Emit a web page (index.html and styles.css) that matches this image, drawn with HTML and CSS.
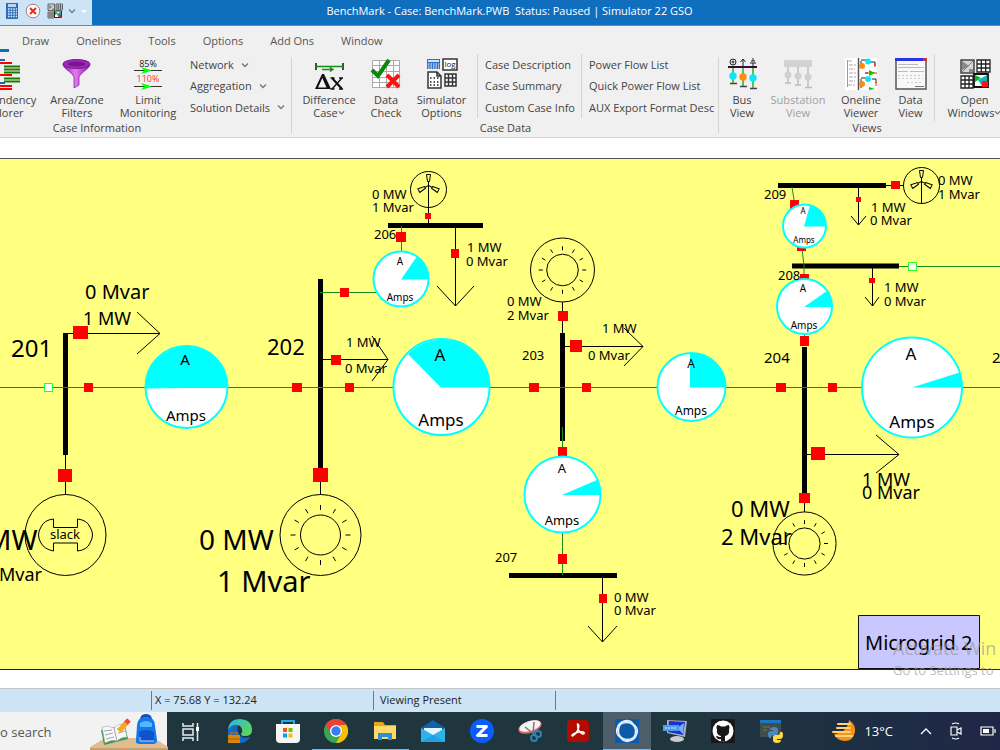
FILE: index.html
```html
<!DOCTYPE html>
<html lang="en">
<head>
<meta charset="utf-8">
<title>BenchMark - Simulator</title>
<link rel="stylesheet" href="styles.css">
</head>
<body>
<header class="titlebar">
  <div class="quick">
    <button class="quick-btn" aria-label="Calculator"><svg width="14" height="16" viewBox="0 0 14 16"><path fill="#2f6db5" d="M1 0h12v16H1z"/><path fill="#b8d8f5" d="M3 1h8v3H3z"/><path stroke="#d7ebfb" stroke-width="1.4" stroke-dasharray="1.6 1" d="M3 6h9M3 8.5h9M3 11h9M3 13.5h9"/></svg></button>
    <button class="quick-btn" aria-label="Abort"><svg width="16" height="16" viewBox="0 0 16 16"><circle cx="8" cy="8" r="6.8" fill="#fff" stroke="#9a7f7f"/><path stroke="#f0281e" stroke-width="2" d="M5 5l6 6M11 5l-6 6"/></svg></button>
    <button class="quick-btn" aria-label="Windows"><svg width="16" height="16" viewBox="0 0 32 32"><use href="#windows"/></svg></button>
    <button class="quick-btn quick-small" aria-label="More"><svg width="8" height="8" viewBox="0 0 8 8"><path class="chev" d="M1 2.5l3 3 3-3"/></svg></button>
    <button class="quick-btn quick-small" aria-label="Customize"><svg width="6" height="8" viewBox="0 0 6 8"><path fill="#fff" d="M0 3h6l-3 3z"/></svg></button>
  </div>
  <h1 class="title">BenchMark - Case: BenchMark.PWB&nbsp; Status: Paused | Simulator 22 GSO</h1>
</header>
<nav class="tabs">
  <button class="tab">Draw</button><button class="tab">Onelines</button><button class="tab">Tools</button><button class="tab">Options</button><button class="tab">Add Ons</button><button class="tab">Window</button>
</nav>
<section class="ribbon">
  <div class="group group-info">
    <div class="tools">
      <button class="tool w-explorer"><svg width="42" height="32" viewBox="0 0 42 32"><path stroke="#1469b8" stroke-width="2" d="M0 2h5M0 25h5"/><path stroke="#f00" stroke-width="2" d="M0 5h12M0 17h12M0 28h12M0 31h12"/><path stroke="#1f7a00" stroke-width="2" d="M4 8.500h16M4 11.500h16M4 14.500h16M4 20.500h16M4 23.500h16"/></svg><span class="flush">ndency<br>lorer</span></button>
      <button class="tool w-area"><svg width="32" height="32" viewBox="0 0 32 32"><defs><linearGradient id="fun"><stop offset="0" stop-color="#8b1fa8"/><stop offset=".45" stop-color="#e27bf0"/><stop offset="1" stop-color="#8a1ba6"/></linearGradient></defs><path fill="url(#fun)" stroke="#7c1694" stroke-width=".7" d="M2 6c0 5 8 7 11 13v11l5-3v-8c3-6 11-8 11-13z"/><ellipse cx="15.500" cy="6" rx="13.500" ry="4.500" fill="#a02abb" stroke="#7c1694"/><ellipse cx="15.500" cy="6" rx="9" ry="2.500" fill="#7a178f"/></svg><span>Area/Zone<br>Filters</span></button>
      <button class="tool w-limit"><svg width="32" height="32" viewBox="0 0 32 32"><text x="16" y="9" text-anchor="middle" font-size="9">85%</text><text x="16" y="24" text-anchor="middle" font-size="9" fill="#f33">110%</text><path stroke="#333" d="M2 12.500h28M2 28.500h28"/><path fill="#0f0" d="M9 9l11 3.500L9 16l3-3.500zM9 25l11 3.500L9 32l3-3.500z"/></svg><span>Limit<br>Monitoring</span></button>
      <div class="list list-plain">
        <button class="item">Network <svg width="8" height="8" viewBox="0 0 8 8"><path class="chev" d="M1 2.500l3 3 3-3"/></svg></button>
        <button class="item">Aggregation <svg width="8" height="8" viewBox="0 0 8 8"><path class="chev" d="M1 2.500l3 3 3-3"/></svg></button>
        <button class="item">Solution Details <svg width="8" height="8" viewBox="0 0 8 8"><path class="chev" d="M1 2.500l3 3 3-3"/></svg></button>
      </div>
    </div>
    <div class="caption">Case Information</div>
  </div>
  <div class="group group-data">
    <div class="tools">
      <button class="tool w-diff"><svg width="32" height="32" viewBox="0 0 32 32"><path stroke="#111" stroke-width="1.500" d="M3 5v7M30 5v7"/><path stroke="#178a17" stroke-width="1.300" fill="none" d="M3 8.500h27M9 11.500h10M17 9.500l3 2-3 2"/><path fill="#111" fill-rule="evenodd" d="M2 31L9 16h2l7 15zM5 29.500h8.500L9.300 20z"/><path stroke="#111" stroke-width="2.200" d="M19 20l10 11"/><path stroke="#111" stroke-width="1.400" d="M29 20L19 31M17.500 20h4M26 20h4M17.500 31h4M26 31h4"/></svg><span>Difference<br>Case<svg width="7" height="8" viewBox="0 0 8 8"><path class="chev" d="M1 2l3 3 3-3"/></svg></span></button>
      <button class="tool w-check"><svg width="32" height="32" viewBox="0 0 32 32"><path fill="#fff" stroke="#aaa" d="M2.500 2.500h27v27h-27zM9.500 2.500v27M16.500 2.500v27M23.500 2.500v27M2.500 7.500h27M2.500 13.500h27M2.500 19.500h27M2.500 24.500h27"/><path stroke="#0a860a" stroke-width="4" fill="none" d="M2 12l6 6L19 2"/><path stroke="#f11" stroke-width="4" d="M17 17l12 12M29 17L17 29"/></svg><span>Data<br>Check</span></button>
      <button class="tool w-sim"><svg width="32" height="32" viewBox="0 0 32 32"><path fill="#2e71c8" d="M1 1h13v10H1z"/><path stroke="#fff" stroke-dasharray="1.500 1" d="M2 6h11M2 8h11M2 10h11"/><path fill="#cfe4ff" d="M2 2h11v2H2z"/><path fill="#fff" stroke="#333" stroke-width="1.500" d="M17 1h14v11H17zM2 14h9l4 4v12H2zM11 14v4h4M19 16h11v12H19zM22.500 16v12M26.500 16v12M19 20h11M19 24h11"/><path stroke="#222" stroke-width="1.500" stroke-dasharray="1.500 2" d="M4 20h9M4 24h9M4 27h9"/><text x="24" y="9" text-anchor="middle" font-size="8">log</text></svg><span>Simulator<br>Options</span></button>
      <div class="list w-list-a">
        <button class="item">Case Description</button>
        <button class="item">Case Summary</button>
        <button class="item">Custom Case Info</button>
      </div>
      <div class="list w-list-b">
        <button class="item">Power Flow List</button>
        <button class="item">Quick Power Flow List</button>
        <button class="item">AUX Export Format Desc</button>
      </div>
    </div>
    <div class="caption">Case Data</div>
  </div>
  <div class="group group-views">
    <div class="tools">
      <button class="tool w-bus"><svg width="32" height="32" viewBox="0 0 32 32"><g fill="none" stroke="#222"><circle cx="7" cy="4" r="3"/><circle cx="7" cy="4" r="1"/><path d="M17 8V1M14.500 4L17 1l2.500 3M27 8V5M24 5h6M25 3h4M27 3V0"/></g><path stroke="#17b017" stroke-width="1.400" d="M7 10v15M17 10v18M27 10v20"/><path stroke="#3b0a3b" stroke-width="2" d="M2 9h29"/><path stroke="#444" stroke-width="1.300" d="M4 25.500h7M14 28.500h7M24 30.500h7"/><circle cx="7" cy="18" r="3.700" fill="#0fe6f5"/><circle cx="17" cy="19" r="3.700" fill="#ff8b0f"/><circle cx="27" cy="20" r="3.700" fill="#0fe6f5"/></svg><span>Bus<br>View</span></button>
      <button class="tool w-sub" disabled><svg width="32" height="32" viewBox="0 0 32 32"><path fill="#d2d2d2" d="M2 2h28v7H2z"/><path stroke="#bbb" stroke-width="1.400" d="M6 9v16M16 9v18M26 9v20M3 25h6M13 27h6M23 29.500h7"/><g fill="#d0d0d0"><circle cx="6" cy="17" r="3.500"/><circle cx="16" cy="18" r="3.500"/><circle cx="26" cy="19" r="3.500"/></g></svg><span>Substation<br>View</span></button>
      <button class="tool w-one"><svg width="32" height="32" viewBox="0 0 32 32"><path fill="#fff" d="M0 0h32v32H0z"/><path stroke="#aaa" stroke-dasharray="4 1" d="M3 3h4M4 7h7M4 11h6M4 15h7M4 19h7M4 23h6M3 27h7"/><path stroke="#999" d="M2.500 2v27"/><path stroke="#555" stroke-width="1.500" d="M13.500 0v32"/><path stroke="#222" fill="none" d="M16 2h6M16 3v5M25 4h5v4M20 15h3M16 20h6v2M27 21h4v4M16 21v9"/><path fill="none" stroke="#f22" d="M30 5v4M20 15h12M31 24v4"/><circle cx="23" cy="3.500" r="3" fill="#0fe6f5"/><circle cx="17" cy="8" r="3" fill="#ff8b0f"/><path fill="#0c0" d="M24 12l6 3-6 3z"/><circle cx="23" cy="21" r="3" fill="#0fe6f5"/><circle cx="17" cy="26" r="3" fill="#ff8b0f"/><path fill="#0c0" d="M24 29l6 2-6 1z"/></svg><span>Oneline<br>Viewer</span></button>
      <button class="tool w-view"><svg width="32" height="32" viewBox="0 0 32 32"><path fill="#f8f8f8" stroke="#555" stroke-width="1.500" d="M1 1h30v30H1z"/><path fill="#2a35e8" d="M0 0h28v3H0z"/><path fill="#c33" d="M28 0h4v3h-4z"/><path stroke="#bbb" d="M3 6.500h20M3 9.500h26M3 13.500h10M15 13.500h14"/><path stroke="#ccc" stroke-dasharray="2 2" d="M3 17.500h25M3 20.500h25M12 24.500h16"/><path stroke="#777" d="M20 28.500h9"/></svg><span>Data<br>View</span></button>
      <button class="tool w-open"><svg width="32" height="32" viewBox="0 0 32 32"><g id="windows"><path fill="#d5d5d5" stroke="#444" stroke-width="1.500" d="M2 2h13v13H2z"/><path fill="#888" d="M3 3l7 5-7 4zM10 11h4v3h-4z"/><path stroke="#777" d="M3 14L14 3"/><path fill="#fff" stroke="#222" stroke-width="1.300" d="M18 2h13v12H18zM22.300 2v12M26.700 2v12M18 6h13M18 10h13M2 18h12v12H2zM6 18v12M10 18v12M2 22h12M2 26h12"/><path fill="#fff" stroke="#111" stroke-width="1.800" d="M15 16h14v13H15z"/><path fill="#0b2" d="M16 17l6 3-6 4z"/><path fill="#12b5bd" d="M19 22l9-5v6l-5 5z"/><path fill="#f11" d="M23 23h6v6h-6z"/></g></svg><span>Open<br>Windows<svg width="7" height="8" viewBox="0 0 8 8"><path class="chev" d="M1 2l3 3 3-3"/></svg></span></button>
    </div>
    <div class="caption">Views</div>
  </div>
</section>
<main class="canvas">
<svg class="oneline" viewBox="0 158 1000 512" role="img" aria-label="Microgrid one-line diagram">
  <defs>
    <g id="sun" fill="none" stroke="#000"><circle r="40.500" vector-effect="non-scaling-stroke"/><circle r="20" vector-effect="non-scaling-stroke"/><path vector-effect="non-scaling-stroke" d="M25 0H30M-25 0H-30M0 25V30M0-25V-30M21.700 12.500L26 15M12.500 21.700L15 26M-21.700 12.500L-26 15M-12.500 21.700L-15 26M21.700-12.500L26-15M12.500-21.700L15-26M-21.700-12.500L-26-15M-12.500-21.700L-15-26"/></g>
    <path id="blade" d="M0 0V-4M-1-4L-2-11H2L1-4Z"/>
    <g id="wind" fill="none" stroke="#000"><circle r="18"/><path d="M0-4V18"/><use href="#blade" y="-4"/><use href="#blade" transform="translate(0 -4) rotate(118)"/><use href="#blade" transform="translate(0 -4) rotate(-118)"/></g>
  </defs>
  <path fill="#ffff80" d="M0 158h1000v512H0z"/>
  <path stroke="#555" d="M0 158.500h1000"/><path stroke="#222" d="M0 669.500h1000"/>

  <g stroke="#000" stroke-width="5">
    <path d="M65.500 333V455M320.500 279V468M562.500 333V441M804.500 347V497"/>
    <path d="M388 225.500H483M509 575.500H617M778 185.500H886M792 266H899"/>
  </g>
  <g stroke="#1c8c1c" fill="none">
    <path d="M0 387.500H1000M320 292.500H376M401.500 226V252M562.500 427V458M562.500 532V575M792 187L795 206M802 248L804 266V280M804.500 334V342M899 266.500H1000"/>
  </g>
  <g stroke="#000" fill="none">
    <path d="M65 333.500H160M137 312L160 333.500 137 354M65.500 455V495"/>
    <path d="M320 359.500H388M372 336L388 359.500 372 381M320.500 467V495"/>
    <path d="M428.500 207V224M455.500 226V306M437 286L455.500 306 474 286"/>
    <path d="M562.500 302V334M562 346.500H643M624 328L643 346.500 624 366"/>
    <path d="M602.500 577V642M588 626L602.500 642 617 626"/>
    <path d="M804 454.500H899M876 435L899 454.500 876 473M804.500 496V512"/>
    <path d="M886 185.500H904M858.500 187V225M851 216L858.500 225 866 216"/>
    <path d="M872.500 267V306M865 297L872.500 306 879 297"/>
  </g>
  <g fill="#f00">
    <path d="M73 326h15v13H73zM84 383h9v9h-9zM58 469h14v13H58z"/>
    <path d="M292 383h10v9h-10zM345 383h9v9h-9zM340 288h9v9h-9zM331 355h10v10h-10zM313 468h15v14H313z"/>
    <path d="M425 213h6v6h-6zM396 232h10v10h-10zM451 249h8v9h-8z"/>
    <path d="M558 311h10v10h-10zM570 340h12v12h-12zM529 383h10v9h-10zM582 383h9v9h-9zM558 447h9v9h-9zM558 554h9v10h-9zM599 594h8v9h-8z"/>
    <path d="M776 383h10v9h-10zM828 383h9v9h-9zM811 447h14v13H811zM799 493h11v10h-11zM800 336h9v10h-9z"/>
    <path d="M891 181h9v8h-9zM856 197h5v5h-5zM790 200h9v9h-9zM797 243h9v8h-9zM869 278h6v5h-6zM800 274h9v9h-9z"/>
  </g>
  <g fill="#fff" stroke="#2f2"><path d="M44.500 383.500h8v8h-8zM908.500 262.500h8v8h-8z"/></g>

  <g fill="#fff" stroke="#0ff" stroke-width="2">
    <circle cx="186.500" cy="387" r="41"/><circle cx="441.500" cy="387" r="48"/><circle cx="691.500" cy="387" r="34"/><circle cx="912" cy="387.500" r="50"/>
    <circle cx="562.500" cy="494.500" r="38"/><circle cx="401" cy="279" r="27.500"/><circle cx="804.500" cy="226" r="21.500"/><circle cx="804.500" cy="306.500" r="27.500"/>
  </g>
  <g fill="#0ff">
    <path d="M186.500 388H228A41 41 0 0 0 145 388.500Z"/>
    <path d="M441 387.500H490A48 48 0 0 0 408 354Z"/>
    <path d="M690 387.500H726A34 34 0 0 0 690 353Z"/>
    <path d="M912 387.500H962A50 50 0 0 0 959.500 372.500Z"/>
    <path d="M562 495H600.500A38 38 0 0 0 597 480Z"/>
    <path d="M401 279.500H429A28 28 0 0 0 416.500 257Z"/>
    <path d="M804 226.500H826A22 22 0 0 0 810 205Z"/>
    <path d="M804 307H832A28 28 0 0 0 827 291Z"/>
  </g>

  <circle cx="65.500" cy="535" r="40.500" fill="none" stroke="#000"/>
  <path fill="none" stroke="#000" d="M53.500 519V527.500H77.500V519Q87 520 90 527 95 535 90 543 87 550 77.500 551V543H53.500V551Q44 549 41 543 36 535 41 527 44 520 53.500 519Z"/>
  <use href="#sun" transform="translate(320.500 535)"/>
  <use href="#sun" transform="translate(562.500 270) scale(.79)"/>
  <use href="#sun" transform="translate(804.500 543.500) scale(.78)"/>
  <use href="#wind" x="428.500" y="189.500"/>
  <use href="#wind" x="921.500" y="185.500"/>

  <path fill="#c8c8ff" stroke="#111" d="M858.500 615.500h121v53h-121z"/>

  <g class="t13">
    <text x="346" y="347">1 MW</text><text x="345" y="373">0 Mvar</text>
    <text x="374" y="239">206</text><text x="372" y="199">0 MW</text><text x="372" y="212">1 Mvar</text>
    <text x="467" y="252">1 MW</text><text x="466" y="266">0 Mvar</text>
    <text x="507" y="306">0 MW</text><text x="507" y="320">2 Mvar</text>
    <text x="602" y="333">1 MW</text><text x="588" y="360">0 Mvar</text>
    <text x="522" y="360">203</text><text x="495" y="562">207</text>
    <text x="614" y="602">0 MW</text><text x="614" y="615">0 Mvar</text>
    <text x="764" y="199">209</text><text x="778" y="280">208</text>
    <text x="938" y="185">0 MW</text><text x="938" y="199">1 Mvar</text>
    <text x="871" y="212">1 MW</text><text x="870" y="225">0 Mvar</text>
    <text x="884" y="292">1 MW</text><text x="884" y="306">0 Mvar</text>
  </g>
  <g class="t15"><text x="764" y="363">204</text><text x="992" y="363">2</text></g>
  <g class="t18">
    <text x="83" y="325">1 MW</text><text x="862" y="486">1 MW</text><text x="862" y="499">0 Mvar</text><text x="-1" y="581">Mvar</text>
  </g>
  <g class="t20"><text x="85" y="299">0 Mvar</text><text x="865" y="650">Microgrid 2</text></g>
  <g class="t22"><text x="267" y="355">202</text><text x="731" y="517">0 MW</text><text x="721" y="545">2 Mvar</text></g>
  <text class="t24" x="11" y="357">201</text>
  <g class="t28"><text x="199" y="550">0 MW</text><text x="-14" y="550">MW</text></g>
  <text class="t29" x="217" y="592">1 Mvar</text>
  <g class="mid">
    <text class="t13" x="65" y="539">slack</text>
    <text class="t15" x="185" y="365">A</text><text class="t15" x="186" y="421">Amps</text>
    <text class="t17" x="440" y="361">A</text><text class="t17" x="441" y="426">Amps</text>
    <text class="t17" x="911" y="360">A</text><text class="t17" x="912" y="428">Amps</text>
    <text class="t12" x="691" y="368">A</text><text class="t12" x="691" y="415">Amps</text>
    <text class="t13" x="562" y="473">A</text><text class="t13" x="562" y="525">Amps</text>
    <text class="t10" x="400" y="265">A</text><text class="t10" x="400" y="301">Amps</text>
    <text class="t8" x="803" y="214">A</text><text class="t8" x="804" y="243">Amps</text>
    <text class="t10" x="803" y="292">A</text><text class="t10" x="804" y="329">Amps</text>
  </g>
</svg>
<div class="watermark"><p class="wm-big">Activate Win</p><p class="wm-small">Go to Settings to</p></div>
</main>
<footer class="status">
  <span class="cell cell-empty"></span><span class="cell cell-xy">X = 75.68 Y = 132.24</span><span class="cell cell-mode">Viewing Present</span><span class="cell"></span>
</footer>
<div class="taskbar">
  <div class="search">
    <input class="search-box" type="text" aria-label="Search" placeholder="o search">
    <svg width="78" height="38" viewBox="0 0 78 38"><path fill="#dfbd91" d="M0 35L15 26h49l14 9v3H0z"/><path fill="#c99f6c" d="M0 36h78v2H0z"/><path fill="#3c9b4a" d="M11 18l3 15 24-6-3-14z"/><path fill="#f8f8fb" stroke="#9aa" stroke-width=".6" d="M12 15q7-2 12 1 4-5 10-4l3 13q-6 0-10 4-5-2-12 2z"/><path stroke="#8a8a9a" stroke-width=".8" d="M24 16l3 13M14 19l8-1M15 23l8-2M16 27l8-2M27 17l6-2M28 21l7-2"/><path stroke="#f6a623" stroke-width="5" d="M29 19L37 10"/><path stroke="#ee4b3c" stroke-width="5" d="M36 11l3-3"/><path fill="#0d4fb5" d="M50 8q0-6 6-6t6 6h-3q0-3-3-3t-3 3z"/><path fill="#1379ea" d="M47 14q0-9 9-9t9 9l2 14q0 4-4 4H50q-5 0-4-4z"/><path fill="#0d54cc" d="M49 20q8-4 15 0v9H49z"/><path fill="#58b5ff" d="M50 11q6-4 12 0v4H50z"/><path stroke="#d9c6ff" fill="none" d="M50 25v4h14"/></svg>
  </div>
  <div class="apps">
    <button class="app" aria-label="Task view"><svg width="24" height="24" viewBox="0 0 24 24"><path fill="none" stroke="#e8eef0" stroke-width="1.500" d="M4 4v3h10V4M4 10h10v6H4zM4 22v-3h10v3M18.500 4v18"/><path fill="#fff" d="M17 8h3v4h-3z"/></svg></button>
    <button class="app" aria-label="Edge"><svg width="26" height="26" viewBox="0 0 26 26"><defs><linearGradient id="edge" x2="1" y2=".6"><stop offset="0" stop-color="#2bb3ee"/><stop offset="1" stop-color="#5ad75a"/></linearGradient></defs><path fill="#1469c7" d="M1 12q2-10 12-7-4 4-2 9 3 8 12 5-4 7-12 6Q0 23 1 12z"/><path fill="url(#edge)" d="M1 12Q2 1 13 1q12 1 12 11 0 6-7 6-4 0-4-2 2-2 1-5-2-5-8-4-4 1-6 5z"/><path fill="#d8860b" d="M1 17h12v8H1z"/><path fill="none" stroke="#b96d05" stroke-width="1.500" d="M4 17v-2h6v2M1 21h12"/></svg></button>
    <button class="app" aria-label="Store"><svg width="24" height="26" viewBox="0 0 24 26"><path fill="none" stroke="#24a7e8" stroke-width="2" d="M6 8V3h12v5"/><path fill="#f5f5f5" d="M0 6h24v15q0 4-4 4H4q-4 0-4-4z"/><path fill="#f1511b" d="M7 10h4v4H7z"/><path fill="#7fba00" d="M12.500 10h4v4h-4z"/><path fill="#00a3ee" d="M7 15.500h4v4H7z"/><path fill="#fbbc09" d="M12.500 15.500h4v4h-4z"/></svg></button>
    <button class="app open" aria-label="Chrome"><svg width="24" height="24" viewBox="0 0 24 24"><circle cx="12" cy="12" r="12" fill="#34a853"/><path fill="#ea4335" d="M1.600 6A12 12 0 0 1 22.400 6H12L7 15z"/><path fill="#fbbc04" d="M22.400 6A12 12 0 0 1 12 24L17.500 14.500 16 6z"/><circle cx="12" cy="12" r="6" fill="#fff"/><circle cx="12" cy="12" r="4.700" fill="#3a7df0"/></svg></button>
    <button class="app open" aria-label="File Explorer"><svg width="22" height="20" viewBox="0 0 22 20"><path fill="#e5a51a" d="M0 1h9l2 3h11v5H0z"/><path fill="#ffd966" d="M0 5h22v13H0z"/><path fill="#2d8fd8" d="M4 12h14v7h-4v-3H8v3H4z"/></svg></button>
    <button class="app" aria-label="Mail"><svg width="24" height="22" viewBox="0 0 24 22"><path fill="#0f63ac" d="M0 8L12 0l12 8v6H0z"/><path fill="#e8f4fb" d="M3 8h18v7H3z"/><path fill="#2fb2ea" d="M0 8l12 7 12-7v14H0z"/><path fill="#1490d7" d="M0 22l12-7 12 7z" opacity=".5"/></svg></button>
    <button class="app" aria-label="Zoom"><svg width="24" height="24" viewBox="0 0 24 24"><circle cx="12" cy="12" r="12" fill="#0b5cff"/><path fill="none" stroke="#fff" stroke-width="3" stroke-linejoin="round" d="M6.500 7.500h10L7.500 16.500h10"/></svg></button>
    <button class="app" aria-label="Snipping Tool"><svg width="26" height="24" viewBox="0 0 26 24"><ellipse cx="13" cy="8" rx="12" ry="6" fill="#d96a70" transform="rotate(-18 13 8)"/><ellipse cx="13" cy="7" rx="11" ry="5" fill="#f3f3f3" transform="rotate(-18 13 7)"/><path stroke="#777" stroke-width="1.500" d="M8 8l9 7M17 3l-1 12"/><g fill="none" stroke="#2d82b7" stroke-width="2"><circle cx="17" cy="19" r="3"/><circle cx="21" cy="15" r="3"/></g></svg></button>
    <button class="app" aria-label="Acrobat"><svg width="22" height="22" viewBox="0 0 22 22"><rect width="22" height="22" rx="4" fill="#b30b00"/><path fill="none" stroke="#fff" stroke-width="1.500" d="M10.500 4q2 0 1 4-2 6-6 8-2-1 3-3 5-2 8-1 2 2-1 2-5-2-5-10z"/></svg></button>
    <button class="app open active" aria-label="Simulator"><svg width="24" height="24" viewBox="0 0 24 24"><path fill="#0e5aa8" d="M0 0h24v24H0z"/><g fill="none" stroke="#e5f0fa" stroke-width="1.300"><ellipse cx="12" cy="12" rx="10.500" ry="8.500"/><ellipse cx="12" cy="12" rx="8.500" ry="10.500"/><ellipse cx="12" cy="12" rx="10.500" ry="8.500" transform="rotate(45 12 12)"/></g></svg></button>
    <button class="app" aria-label="Remote PC"><svg width="24" height="24" viewBox="0 0 24 24"><ellipse cx="14" cy="20" rx="7" ry="3" fill="#c9ccd0"/><path fill="#aab2bd" d="M4 1l20 1-2 16-18-4z"/><path fill="#1b2fd0" d="M6 2l16 1-2 13-15-3z"/><path fill="#7fa9ff" d="M14 9l7-5-1 11z"/><path fill="#4a9de8" d="M0 6h16v6H0z"/><path stroke="#d9efff" stroke-dasharray="2 1" d="M2 9h12"/></svg></button>
    <button class="app" aria-label="GitHub"><svg width="24" height="24" viewBox="0 0 24 24"><path fill="#191717" d="M0 0h24v24H0z"/><circle cx="12" cy="12" r="10.500" fill="#fff"/><path fill="#191717" d="M6 6q3 0 4 1.500h4Q15 6 18 6q1 3 0 4 1 6-4 7v5.500h-4V20q-4 1-5-3 2 0 3 1l2 0v-1q-5-1-4-7-1-1 0-4z"/></svg></button>
    <button class="app" aria-label="Python"><svg width="24" height="24" viewBox="0 0 24 24"><path fill="#454a4d" d="M0 1h21v17H0z"/><path fill="#1a79c0" d="M0 1h21v3H0z"/><path stroke="#4d8f3f" d="M3 8h7M3 11h4"/><path fill="#4788c0" d="M8 15q0-3 3-3h2v-1h-3q0-3 4-3t4 3v3q0 2-2 2h-3q-2 0-2 3-3 1-3-4z"/><path fill="#ffd845" d="M23 16q0 4-3 4h-3v1h4q0 3-4 3t-4-3v-3q0-2 2-2h3q2 0 2-3 3-1 3 3z"/></svg></button>
  </div>
  <div class="tray">
    <svg width="24" height="24" viewBox="0 0 24 24"><path fill="#f5921b" d="M17 1q7 5 6 12-2 9-10 9-8 0-11-7 13-1 15-14z"/><path stroke="#ffd277" stroke-width="2" stroke-linecap="round" d="M6 5h12M5 9h13M1 13h17M4 17h16"/></svg>
    <span class="temp">13°C</span>
    <svg width="12" height="8" viewBox="0 0 12 8"><path fill="none" stroke="#fff" stroke-width="1.300" d="M1 7l5-5 5 5"/></svg>
    <svg width="14" height="18" viewBox="0 0 14 18"><path fill="none" stroke="#fff" stroke-width="1.200" d="M3 2q4-2 7 0M3 16q4 2 7 0M2 5h6v8H2zM8 8l4-2v6L8 10"/></svg>
    <svg width="16" height="10" viewBox="0 0 16 10"><path fill="none" stroke="#fff" stroke-width="1.200" d="M1 1h12v8H1zM15 3v4"/><path fill="#fff" d="M3 3h6v4H3z"/></svg>
  </div>
</div>
</body>
</html>
```
FILE: styles.css
```css
* { box-sizing: border-box; }
body { margin: 0; overflow-x: hidden; background: #fff; color: #444; font: 11px/13px "Open Sans", "Noto Sans", sans-serif; }
button { border: 0; padding: 0; margin: 0; background: none; color: inherit; font: inherit; }
svg { display: block; flex: none; }
.chev { fill: none; stroke: #777; stroke-width: 1.3; }

.titlebar { display: flex; height: 26px; background: #106ebe; border-bottom: 1px solid #4b93d1; }
.quick { display: flex; align-items: center; gap: 6px; width: 92px; padding: 0 0 3px 5px; background: #cde4f7; }
.quick-small { margin-left: -1px; }
.title { flex: 1; margin: 0; padding-right: 73px; color: #fff; font-size: 11px; font-weight: 400; line-height: 22px; text-align: center; white-space: nowrap; }

.tabs { display: flex; gap: 27px; height: 28px; padding: 0 22px; background: #f0f0f0; color: #555; line-height: 29px; position: relative; }
.tabs::before { content: ""; position: absolute; left: 0; bottom: 2px; width: 9px; height: 3px; background: #106ebe; }

.ribbon { display: flex; height: 84px; overflow: hidden; background: #f0f0f0; border-bottom: 1px solid #d2d2d2; }
.group { flex: none; position: relative; }
.group::after { content: ""; position: absolute; right: 0; top: 3px; width: 1px; height: 76px; background: #d4d4d4; }
.group-info { width: 292px; }
.group-data { width: 427px; }
.group-views { width: 296px; }
.tools { display: flex; height: 67px; }
.caption { line-height: 14px; text-align: center; }
.group-info .caption { padding-right: 98px; }
.tool { display: flex; flex-direction: column; align-items: center; gap: 3px; flex: none; padding-top: 4px; text-align: center; white-space: nowrap; }
.tool svg { overflow: visible; }
.tool span svg { display: inline-block; }
.tool text { fill: #222; font-family: "Open Sans", sans-serif; }
.tool text[fill] { fill: #ff3333; }
.tool:disabled { color: #a0a0a0; }
.w-explorer { width: 42px; }
.flush { width: 36px; margin-left: -1px; align-self: flex-start; text-align: left; }
.w-area { width: 70px; }
.w-limit { width: 72px; }
.w-diff { width: 74px; }
.w-check { width: 40px; }
.w-sim { width: 71px; }
.w-bus { width: 46px; }
.w-sub { width: 66px; }
.w-one { width: 60px; }
.w-view { width: 39px; }
.w-open { width: 80px; margin-left: 4px; border-left: 1px solid #d4d4d4; }
.list { display: flex; flex-direction: column; align-items: flex-start; height: 64px; padding-left: 7px; border-left: 1px solid #d4d4d4; white-space: nowrap; }
.list-plain { padding-left: 6px; border: 0; }
.w-list-a { width: 104px; }
.w-list-b { width: 137px; }
.item { display: flex; align-items: center; gap: 7px; flex: 1; }

.canvas { position: relative; overflow: hidden; padding: 20px 0 18px; background: #fff; }
.oneline { width: 100%; height: auto; }
.oneline text { fill: #000; font-family: "Noto Sans", "Open Sans", sans-serif; }
.mid { text-anchor: middle; }
.t8 { font-size: 8px; }
.t10 { font-size: 10px; }
.t12 { font-size: 12px; }
.t13 { font-size: 13px; }
.t15 { font-size: 15px; }
.t17 { font-size: 17px; }
.t18 { font-size: 18px; }
.t20 { font-size: 20px; }
.t22 { font-size: 22px; }
.t24 { font-size: 24px; }
.t28 { font-size: 28px; }
.t29 { font-size: 29px; }
.watermark { position: absolute; right: 0; bottom: 8px; width: 107px; overflow: hidden; color: rgba(150, 150, 150, .65); white-space: nowrap; }
.watermark p { margin: 0; }
.wm-big { font-size: 18px; line-height: 24px; }
.wm-small { font-size: 13px; line-height: 20px; }

.status { display: flex; height: 24px; padding: 2px 0; background: #cde4f7; border-top: 1px solid #c4c4c4; color: #222; line-height: 18px; }
.cell { padding-left: 3px; }
.cell + .cell { border-left: 1px solid #777; }
.cell-empty { width: 151px; }
.cell-xy { width: 222px; }
.cell-mode { width: 182px; }
.cell-mode.cell { padding-left: 6px; }

.taskbar { display: flex; height: 38px; background: linear-gradient(90deg, #20363f 0 70%, #1e2747); }
.search { display: flex; flex: none; width: 167px; background: #f2f2f2; }
.search-box { width: 90px; padding: 2px 0 0; border: 0; background: none; color: #444; font: 13px/20px "Open Sans", "Noto Sans", sans-serif; }
.search-box::placeholder { color: #555; opacity: 1; }
.apps { display: flex; flex: 0 0 629px; }
.app { display: flex; flex: 1; align-items: center; justify-content: center; border-bottom: 1px solid transparent; }
.open { border-color: #76b9ed; }
.active { background: #4b5e69; }
.tray { display: flex; flex: 1; align-items: center; justify-content: flex-end; gap: 17px; padding-right: 4px; color: #fff; }
.temp { margin: 0 10px 0 -9px; font-size: 13px; }
```
